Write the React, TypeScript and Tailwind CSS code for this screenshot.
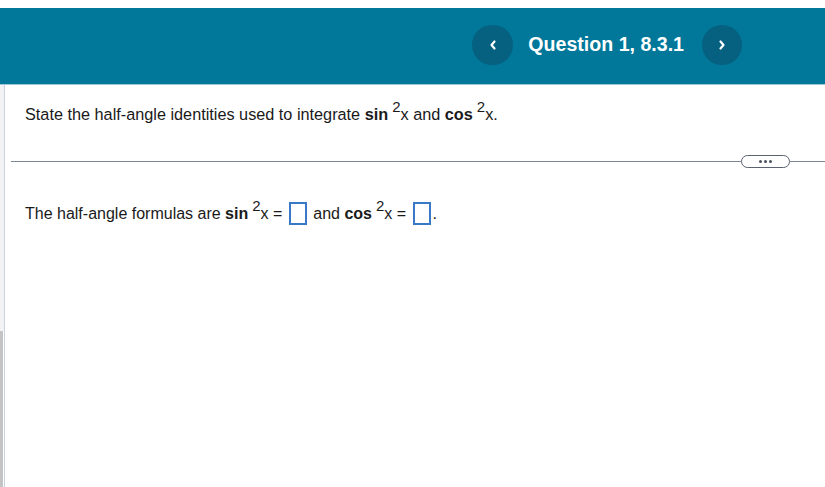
import React from 'react';

const Sq = ({ fn }: { fn: string }) => (
  <>
    <span className="font-bold">{fn}</span>
    <span className="relative top-[-8px] ml-[4px] text-[15px]">2</span>
    <span>x</span>
  </>
);

const AnswerBox = () => (
  <span className="inline-block align-middle w-[18px] h-[23px] border-2 border-[#3a78c8] mx-[2px] relative top-[-1px]" />
);

const App: React.FC = () => {
  return (
    <div className="w-[825px] h-[487px] bg-white overflow-hidden flex flex-col font-['Liberation_Sans',Arial,sans-serif] text-[#1a1a1a]">
      {/* top strip */}
      <div className="h-2 bg-white" />

      {/* Header */}
      <header className="h-[77px] bg-[#01789a] border-b border-[#9fc9d8] flex items-center justify-end pr-[83px] pb-[2px]">
        <button className="w-[41px] h-[40px] rounded-full bg-[#06607f] flex items-center justify-center text-white">
          <svg width="10" height="12" viewBox="0 0 10 12">
            <path d="M6.5 2.5 L3.5 6 L6.5 9.5" stroke="white" strokeWidth="2.2" fill="none" strokeLinecap="round" strokeLinejoin="round" />
          </svg>
        </button>
        <h1 className="ml-[15px] mr-[18px] text-white font-bold text-[19.6px]">Question 1, 8.3.1</h1>
        <button className="w-[40px] h-[40px] rounded-full bg-[#06607f] flex items-center justify-center text-white">
          <svg width="10" height="12" viewBox="0 0 10 12">
            <path d="M3.5 2.5 L6.5 6 L3.5 9.5" stroke="white" strokeWidth="2.2" fill="none" strokeLinecap="round" strokeLinejoin="round" />
          </svg>
        </button>
      </header>

      {/* Body */}
      <div className="flex-1 flex">
        <div className="w-[5px] flex flex-col border-r border-[#c9d3e3]">
          <div className="h-[246px] bg-[#f3f3f5]" />
          <div className="flex-1 bg-[#c4c4c4] w-[3px]" />
        </div>

        <main className="flex-1 flex flex-col">
          <p className="pl-[20px] mt-[19px] text-[16.25px] leading-[20px]">
            State the half-angle identities used to integrate <Sq fn="sin" /> and <Sq fn="cos" />.
          </p>

          {/* divider */}
          <div className="mt-[30px] ml-[6px] flex items-center">
            <div className="flex-1 h-px bg-[#7b8797]" />
            <button className="w-[49px] h-[13px] rounded-full border border-[#5a6270] flex items-center justify-center gap-[2px] bg-white">
              <span className="w-[3px] h-[3px] bg-[#4a5260] rounded-full" />
              <span className="w-[3px] h-[3px] bg-[#4a5260] rounded-full" />
              <span className="w-[3px] h-[3px] bg-[#4a5260] rounded-full" />
            </button>
            <div className="w-[35px] h-px bg-[#7b8797]" />
          </div>

          <p className="pl-[20px] mt-[34px] text-[16px] leading-[24px]">
            The half-angle formulas are <Sq fn="sin" /> = <AnswerBox /> and <Sq fn="cos" /> = <AnswerBox />.
          </p>
        </main>
      </div>
    </div>
  );
};

export default App;
